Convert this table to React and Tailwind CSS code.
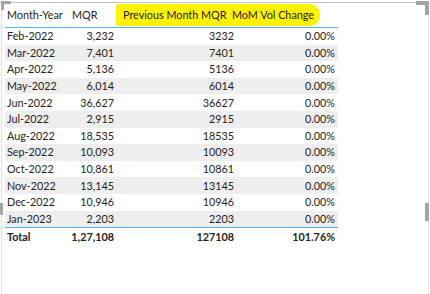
const rows = [
  ['Feb-2022', '3,232', '3232', '0.00%'],
  ['Mar-2022', '7,401', '7401', '0.00%'],
  ['Apr-2022', '5,136', '5136', '0.00%'],
  ['May-2022', '6,014', '6014', '0.00%'],
  ['Jun-2022', '36,627', '36627', '0.00%'],
  ['Jul-2022', '2,915', '2915', '0.00%'],
  ['Aug-2022', '18,535', '18535', '0.00%'],
  ['Sep-2022', '10,093', '10093', '0.00%'],
  ['Oct-2022', '10,861', '10861', '0.00%'],
  ['Nov-2022', '13,145', '13145', '0.00%'],
  ['Dec-2022', '10,946', '10946', '0.00%'],
  ['Jan-2023', '2,203', '2203', '0.00%'],
];

const App = () => (
  <div className="relative w-[430px] h-[294px] bg-white overflow-hidden whitespace-nowrap text-[10.8px] text-[#252423] font-['Lato',sans-serif]">
    {/* visual frame */}
    <div className="absolute left-0 right-[2px] top-[2px] h-px bg-[#c6c6c6]" />
    <div className="absolute left-[1px] top-[2px] bottom-0 w-px bg-[#e3e3e3]" />
    <div className="absolute right-[1px] top-[2px] bottom-0 w-px bg-[#e3e3e3]" />
    <div className="absolute left-[1px] top-[1px] w-[10px] h-[3px] bg-[#a3a3a3]" />
    <div className="absolute left-[1px] top-[1px] w-[3px] h-[9px] bg-[#a3a3a3]" />
    <div className="absolute left-[416px] top-[1px] w-[13px] h-[4px] bg-[#a3a3a3]" />
    <div className="absolute left-[425px] top-[1px] w-[4px] h-[14px] bg-[#a3a3a3]" />
    <div className="absolute left-0 top-[203px] w-[3px] h-[12px] bg-[#a6a6a6]" />
    <div className="absolute left-[425px] top-[203px] w-[4px] h-[18px] bg-[#a6a6a6]" />

    <div className="pl-[5px] pt-[3px] w-[338px]">
      {/* header */}
      <div className="flex items-center h-[25px] border-b border-[#5eaef4]">
        <div className="w-[63px] pl-[2px]">Month-Year</div>
        <div className="w-[48px] pl-[4px]">MQR</div>
        <div className="flex items-center h-[22px] w-[204px] bg-[#fff200] rounded-l-[3px] rounded-r-[10px]">
          <div className="w-[116px] pl-[7px]">Previous Month MQR</div>
          <div>MoM Vol Change</div>
        </div>
      </div>
      {/* body */}
      {rows.map((r, i) => (
        <div key={r[0]} className={`flex items-center h-[16.6px] ${i % 2 ? 'bg-[#eeeeee]' : 'bg-white'}`}>
          <div className="w-[63px] pl-[2px]">{r[0]}</div>
          <div className="w-[50px] pr-[4px] text-right">{r[1]}</div>
          <div className="w-[120px] pr-[4px] text-right">{r[2]}</div>
          <div className="w-[100px] pr-[3px] text-right">{r[3]}</div>
        </div>
      ))}
      {/* total */}
      <div className="flex items-center h-[18px] border-t border-[#5eaef4] font-bold">
        <div className="w-[63px] pl-[2px]">Total</div>
        <div className="w-[50px] pr-[4px] text-right">1,27,108</div>
        <div className="w-[120px] pr-[4px] text-right">127108</div>
        <div className="w-[100px] pr-[3px] text-right">101.76%</div>
      </div>
    </div>
  </div>
);

export default App;
